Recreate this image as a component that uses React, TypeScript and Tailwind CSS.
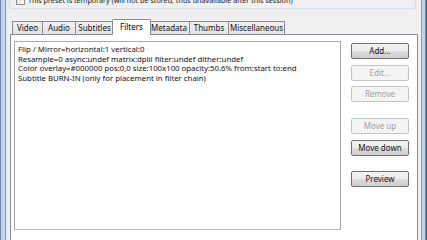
import React from "react";

const font = "font-['Noto_Sans','Open_Sans',sans-serif]";

function Btn({ label, disabled }: { label: string; disabled?: boolean }) {
  return (
    <div
      className={
        "h-[16px] w-[58px] rounded-[2px] border flex items-center justify-center text-[8px] leading-none " +
        (disabled
          ? "border-[#c3c6c9] bg-[#f4f4f4] text-[#a0a0a0]"
          : "border-[#707070] bg-[linear-gradient(to_bottom,#f2f2f2_0%,#ebebeb_50%,#dddddd_51%,#cfcfcf_100%)] text-[#111]")
      }
    >
      {label}
    </div>
  );
}

export default function App() {
  const tabs = [
    { n: "Video", w: 31 },
    { n: "Audio", w: 33 },
    { n: "Subtitles", w: 38 },
    { n: "Filters", w: 35, sel: true },
    { n: "Metadata", w: 41 },
    { n: "Thumbs", w: 39 },
    { n: "Miscellaneous", w: 56 },
  ];
  const lines = [
    "Flip / Mirror=horizontal:1 vertical:0",
    "Resample=0 async:undef matrix:dplii filter:undef dither:undef",
    "Color overlay=#000000 pos:0,0 size:100x100 opacity:50.6% from:start to:end",
    "Subtitle BURN-IN (only for placement in filter chain)",
  ];
  return (
    <div className={"w-[427px] h-[240px] overflow-hidden flex bg-[#f0f0f0] text-black " + font}>
      {/* left window frame */}
      <div className="w-[7px] h-full shrink-0 bg-[linear-gradient(to_right,#7289a1_0px,#7289a1_1px,#c0d6ec_1px,#c0d6ec_5px,#8ea2b6_5px,#8ea2b6_6px,#dfe6ed_6px)]" />
      <div className="flex-1 flex flex-col min-w-0">
        {/* top group box (cut off) */}
        <div className="h-[13px] shrink-0 pl-[2px] pr-[5px]">
          <div className="h-[13px] border-x border-b border-[#d5dfe5] rounded-b-[3px] relative">
            <div className="flex items-center gap-[3px] pl-[6px] -mt-[4px]">
              <div className="w-[9px] h-[9px] border border-[#8f8f8f] bg-[linear-gradient(135deg,#dcdcdc,#fbfbfb)]" />
              <span className="text-[7.2px] leading-none text-[#222] whitespace-nowrap">
                This preset is temporary (will not be stored, thus unavailable after this session)
              </span>
            </div>
          </div>
        </div>
        {/* tab strip */}
        <div className="h-[21px] shrink-0 flex items-end pl-[5px] relative z-10">
          {tabs.map((t, i) =>
            t.sel ? (
              <div
                key={t.n}
                style={{ width: t.w + 4 }}
                className="h-[16px] -mx-[2px] -mb-px relative z-10 bg-white border border-b-0 border-[#898c95] rounded-t-[2px] flex items-center justify-center text-[8px] leading-none pb-[2px]"
              >
                {t.n}
              </div>
            ) : (
              <div
                key={t.n}
                style={{ width: t.w }}
                className={
                  "h-[13px] border-t border-r border-[#898c95] bg-[linear-gradient(to_bottom,#f2f2f2,#e3e3e3)] flex items-center justify-center text-[8px] leading-none text-[#111] " +
                  (i === 0 ? "border-l" : "")
                }
              >
                {t.n}
              </div>
            )
          )}
        </div>
        {/* tab panel */}
        <div className="flex-1 ml-[3px] mr-[3px] border-l border-t border-r border-[#898c95] bg-white flex pt-[6px] pl-[3px] pr-[8px]">
          <div className="w-[327px] h-[189px] border border-[#a5a9b0] border-b-[#b8b8b8] bg-white px-[3px] pt-[3px]">
            {lines.map((l) => (
              <div key={l} className="text-[7.8px] leading-[9.5px] whitespace-nowrap text-[#111]">
                {l}
              </div>
            ))}
          </div>
          <div className="flex-1" />
          <div className="flex flex-col pt-[2px]">
            <Btn label="Add..." />
            <div className="h-[6px]" />
            <Btn label="Edit..." disabled />
            <div className="h-[5px]" />
            <Btn label="Remove" disabled />
            <div className="h-[16px]" />
            <Btn label="Move up" disabled />
            <div className="h-[6px]" />
            <Btn label="Move down" />
            <div className="h-[15px]" />
            <Btn label="Preview" />
          </div>
        </div>
      </div>
      {/* right window frame */}
      <div className="w-[6px] h-full shrink-0 bg-[linear-gradient(to_right,#8ea2b6_0px,#8ea2b6_1px,#bcd4ec_1px,#bcd4ec_4px,#7289a1_4px,#7289a1_5px,#4f6378_5px)]" />
    </div>
  );
}
